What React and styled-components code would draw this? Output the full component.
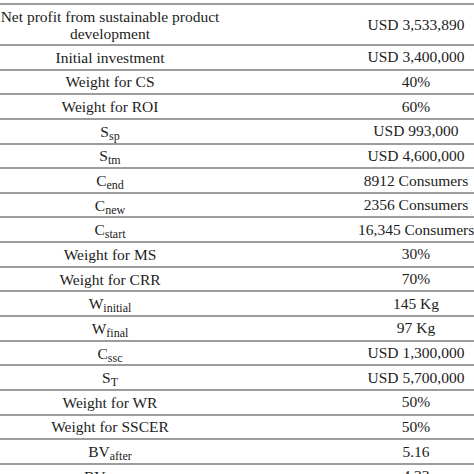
import React from 'react';
import styled, { createGlobalStyle } from 'styled-components';

const GlobalStyle = createGlobalStyle`
  html, body {
    margin: 0;
    padding: 0;
    background: #fff;
  }
  body {
    width: 474px;
    height: 474px;
    overflow: hidden;
    font-family: "Liberation Serif", "DejaVu Serif", serif;
    color: #1c1c1c;
  }
`;

const Table = styled.div`
  margin-top: 3px;
  border-top: 2px solid #9c9c9c;
  width: 474px;
`;

const Row = styled.div`
  display: grid;
  grid-template-columns: 220px 1fr;
  box-sizing: border-box;
  height: ${p => (p.$tall ? '41px' : '24.65px')};
  border-bottom: 2px solid #9c9c9c;
`;

const Label = styled.div`
  display: flex;
  align-items: center;
  justify-content: center;
  text-align: center;
  font-size: 15.5px;
  line-height: 17px;
  white-space: nowrap;
`;

const Value = styled.div`
  display: flex;
  align-items: center;
  justify-content: center;
  padding-left: 138px;
  font-size: 15.5px;
  white-space: nowrap;
`;

const Sub = styled.span`
  font-size: 12px;
  line-height: 0;
  vertical-align: -3px;
`;

const rows = [
  { label: <>Net profit from sustainable product<br />development</>, value: 'USD 3,533,890', tall: true },
  { label: 'Initial investment', value: 'USD 3,400,000' },
  { label: 'Weight for CS', value: '40%' },
  { label: 'Weight for ROI', value: '60%' },
  { label: <>S<Sub>sp</Sub></>, value: 'USD 993,000' },
  { label: <>S<Sub>tm</Sub></>, value: 'USD 4,600,000' },
  { label: <>C<Sub>end</Sub></>, value: '8912 Consumers' },
  { label: <>C<Sub>new</Sub></>, value: '2356 Consumers' },
  { label: <>C<Sub>start</Sub></>, value: '16,345 Consumers' },
  { label: 'Weight for MS', value: '30%' },
  { label: 'Weight for CRR', value: '70%' },
  { label: <>W<Sub>initial</Sub></>, value: '145 Kg' },
  { label: <>W<Sub>final</Sub></>, value: '97 Kg' },
  { label: <>C<Sub>ssc</Sub></>, value: 'USD 1,300,000' },
  { label: <>S<Sub>T</Sub></>, value: 'USD 5,700,000' },
  { label: 'Weight for WR', value: '50%' },
  { label: 'Weight for SSCER', value: '50%' },
  { label: <>BV<Sub>after</Sub></>, value: '5.16' },
  { label: <>BV<Sub>before</Sub></>, value: '4.33' },
];

export default function App() {
  return (
    <>
      <GlobalStyle />
      <Table>
        {rows.map((r, i) => (
          <Row key={i} $tall={r.tall}>
            <Label><span>{r.label}</span></Label>
            <Value>{r.value}</Value>
          </Row>
        ))}
      </Table>
    </>
  );
}
